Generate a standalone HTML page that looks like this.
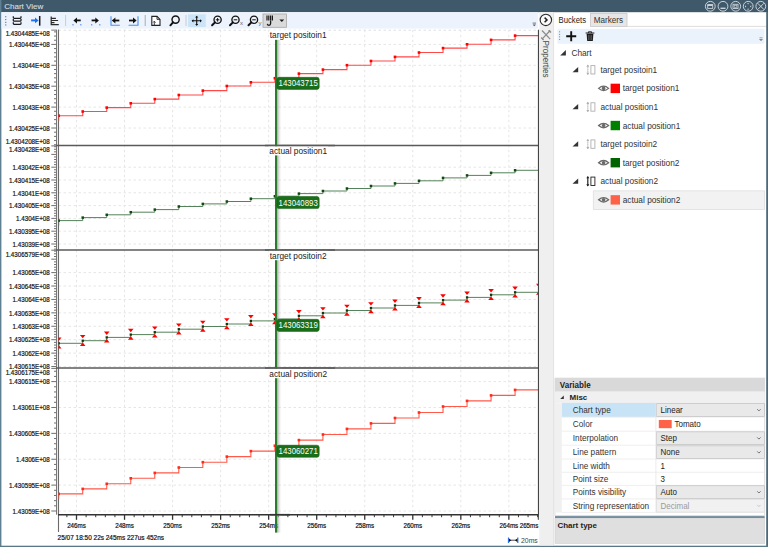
<!DOCTYPE html>
<html><head><meta charset="utf-8"><style>
html,body{margin:0;padding:0;width:768px;height:547px;overflow:hidden;background:#fff;}
svg{display:block;}
text{font-family:"Liberation Sans",sans-serif;}
</style></head><body>
<svg width="768" height="547" viewBox="0 0 768 547" font-family="Liberation Sans, sans-serif">
<rect x="0" y="0" width="768" height="547" fill="#ffffff"/>
<rect x="0" y="0" width="768" height="12.2" fill="#40596a"/>
<text x="4.20" y="8.83" font-size="7.40" fill="#d4dde3" text-anchor="start" textLength="39.10" lengthAdjust="spacingAndGlyphs"  stroke="#d4dde3" stroke-width="0.10">Chart View</text>
<circle cx="710.3" cy="6.3" r="4.9" fill="none" stroke="#c9d3da" stroke-width="1"/>
<circle cx="723.0" cy="6.3" r="4.9" fill="none" stroke="#c9d3da" stroke-width="1"/>
<circle cx="735.7" cy="6.3" r="4.9" fill="none" stroke="#c9d3da" stroke-width="1"/>
<circle cx="748.2" cy="6.3" r="4.9" fill="none" stroke="#c9d3da" stroke-width="1"/>
<circle cx="760.8" cy="6.3" r="4.9" fill="none" stroke="#c9d3da" stroke-width="1"/>
<rect x="707.7" y="4.6" width="5" height="3.8" fill="none" stroke="#c9d3da" stroke-width="0.9"/><rect x="707.7" y="4.4" width="5" height="1.6" fill="#c9d3da"/>
<rect x="720.5" y="7.6" width="5" height="1.4" fill="#c9d3da"/>
<rect x="733.0" y="4.3" width="5" height="4.2" fill="none" stroke="#c9d3da" stroke-width="0.9"/><rect x="734.2" y="5.4" width="2.6" height="2" fill="none" stroke="#c9d3da" stroke-width="0.6"/>
<path d="M748.1 4.6 L747 3.3 H749.2 Z M748.1 8.2 L747 9.5 H749.2 Z M746.3 6.4 L745 5.3 V7.5 Z M749.9 6.4 L751.2 5.3 V7.5 Z" fill="#c9d3da"/>
<path d="M757.6 3.2 L764 9.6 M764 3.2 L757.6 9.6" stroke="#c9d3da" stroke-width="1" fill="none"/>
<rect x="0" y="0" width="1.4" height="547" fill="#5f7f93"/>
<rect x="766.2" y="12" width="1.8" height="535" fill="#4d6a7c"/>
<rect x="0" y="545.7" width="768" height="1.3" fill="#5b7889"/>
<rect x="1.5" y="12.2" width="536.4" height="16.4" fill="#ecf3fc"/>
<rect x="5.2" y="16.2" width="1.1" height="1.1" fill="#666"/>
<rect x="5.2" y="19.0" width="1.1" height="1.1" fill="#666"/>
<rect x="5.2" y="21.8" width="1.1" height="1.1" fill="#666"/>
<rect x="5.2" y="24.4" width="1.1" height="1.1" fill="#666"/>
<path d="M13.3 16.2 V17.6 Q13.3 18.3 14.1 18.3 H20.2 Q21 18.3 21 17.6 V16.2" stroke="#1a1a1a" stroke-width="1.25" fill="none"/>
<path d="M13.3 19.1 V20.5 Q13.3 21.2 14.1 21.2 H20.2 Q21 21.2 21 20.5 V19.1" stroke="#1a1a1a" stroke-width="1.25" fill="none"/>
<path d="M13.3 22.2 V23.6 Q13.3 24.3 14.1 24.3 H20.2 Q21 24.3 21 23.6 V22.2" stroke="#1a1a1a" stroke-width="1.25" fill="none"/>
<path d="M31.1 20.4 H36" stroke="#1a6ff5" stroke-width="1.9"/><path d="M35 17.6 L38.6 20.4 L35 23.2 Z" fill="#1a6ff5"/><line x1="39.7" y1="16" x2="39.7" y2="25.7" stroke="#1a1a1a" stroke-width="1.5"/>
<path d="M51.2 16.4 V24.7 H58.8 M51.2 18.4 H55.9 M51.2 20.5 H58.1 M51.2 22.6 H54.5" stroke="#2a2a2a" stroke-width="1.2" fill="none"/>
<line x1="65.6" y1="15" x2="65.6" y2="26" stroke="#c8ccd2" stroke-width="1"/>
<path d="M80.7 20.4 H75.9" stroke="#111" stroke-width="1.8"/><path d="M73.4 20.4 L77.0 17.4 L77.0 23.4 Z" fill="#111"/>
<rect x="72.4" y="24.2" width="1.2" height="1.2" fill="#3b82f0"/><rect x="80.2" y="24.2" width="1.2" height="1.2" fill="#3b82f0"/>
<path d="M91.6 20.4 H96.4" stroke="#111" stroke-width="1.8"/><path d="M98.9 20.4 L95.3 17.4 L95.3 23.4 Z" fill="#111"/>
<rect x="91.1" y="24.2" width="1.2" height="1.2" fill="#3b82f0"/><rect x="99.2" y="24.2" width="1.2" height="1.2" fill="#3b82f0"/>
<path d="M119.3 20.5 H114.3" stroke="#111" stroke-width="1.8"/><path d="M111.8 20.5 L115.4 17.5 L115.4 23.5 Z" fill="#111"/>
<path d="M111 16.2 V25.2 H119.8" stroke="#4b8ff0" stroke-width="1.1" fill="none"/>
<path d="M129.0 20.5 H134.1" stroke="#111" stroke-width="1.8"/><path d="M136.6 20.5 L133.0 17.5 L133.0 23.5 Z" fill="#111"/>
<path d="M138 16.2 V25.2 H128.6" stroke="#4b8ff0" stroke-width="1.1" fill="none"/>
<line x1="145.2" y1="15" x2="145.2" y2="26" stroke="#a8acb2" stroke-width="1"/>
<path d="M151.8 16.4 H157 L160 19.4 V25.4 H151.8 Z" fill="#fff" stroke="#222" stroke-width="1.1"/><path d="M157 16.4 V19.4 H160" fill="none" stroke="#222" stroke-width="0.9"/><path d="M154.3 25 V21.3 M153 22.6 L154.3 21.2 L155.6 22.6" stroke="#333" stroke-width="0.9" fill="none"/>
<circle cx="175.6" cy="19.6" r="3.6" fill="none" stroke="#111" stroke-width="1.4"/><line x1="173.0" y1="22.3" x2="170.4" y2="25.3" stroke="#111" stroke-width="2.0" stroke-linecap="round"/>
<line x1="186" y1="15" x2="186" y2="26" stroke="#c8ccd2" stroke-width="1"/>
<rect x="188" y="14.3" width="17.8" height="12.7" fill="#cce4f8"/>
<path d="M192.2 20.8 H201.2 M196.7 16.4 V25.2" stroke="#111" stroke-width="1.1"/>
<path d="M191.6 20.8 L193.4 19.2 V22.4 Z M201.8 20.8 L200 19.2 V22.4 Z M196.7 15.8 L195.1 17.6 H198.3 Z M196.7 25.8 L195.1 24 H198.3 Z" fill="#111"/>
<circle cx="217.6" cy="19.8" r="3.6" fill="none" stroke="#111" stroke-width="1.35"/><line x1="215.0" y1="22.4" x2="212.1" y2="25.3" stroke="#111" stroke-width="2.0" stroke-linecap="round"/>
<line x1="215.8" y1="19.8" x2="219.4" y2="19.8" stroke="#111" stroke-width="1.0"/>
<line x1="217.6" y1="18.0" x2="217.6" y2="21.6" stroke="#111" stroke-width="1.0"/>
<circle cx="235.5" cy="19.8" r="3.6" fill="none" stroke="#111" stroke-width="1.35"/><line x1="232.9" y1="22.4" x2="230.0" y2="25.3" stroke="#111" stroke-width="2.0" stroke-linecap="round"/>
<line x1="233.7" y1="19.8" x2="237.3" y2="19.8" stroke="#111" stroke-width="1.0"/>
<text x="239.90" y="25.43" font-size="6.00" fill="#666" text-anchor="start" >x</text>
<circle cx="254.0" cy="19.8" r="3.6" fill="none" stroke="#111" stroke-width="1.35"/><line x1="251.4" y1="22.4" x2="248.5" y2="25.3" stroke="#111" stroke-width="2.0" stroke-linecap="round"/>
<line x1="252.2" y1="19.8" x2="255.8" y2="19.8" stroke="#111" stroke-width="1.0"/>
<text x="258.60" y="25.13" font-size="6.00" fill="#666" text-anchor="start" >y</text>
<rect x="263" y="14" width="23.5" height="13.3" fill="#dadada" stroke="#a9a9a9" stroke-width="0.8"/>
<path d="M267.0 15.6 V20.6 M268.8 15.6 V20.6 M270.6 15.6 V20.6 M272.4 15.6 V20.6" stroke="#1a1a1a" stroke-width="1.2"/>
<path d="M270.6 20.6 V23.6 Q270.6 25.3 269 25.3 Q267.5 25.3 267.3 23.8" stroke="#1a1a1a" stroke-width="1.3" fill="none"/>
<path d="M279.4 19.4 H284.2 L281.8 21.9 Z" fill="#1a1a1a"/>
<path d="M532.6 23.1 H536.0" stroke="#555" stroke-width="0.8"/><path d="M532.6 24.4 H536.0 L534.3 26.2 Z" fill="#555"/>
<defs><linearGradient id="sh" x1="0" x2="1" y1="0" y2="0"><stop offset="0" stop-color="#8a8a8a" stop-opacity="0.75"/><stop offset="1" stop-color="#ffffff" stop-opacity="0"/></linearGradient></defs>
<line x1="76.50" y1="29.8" x2="76.50" y2="514" stroke="#e6e6e6" stroke-width="1" stroke-dasharray="2.5,2.5"/>
<line x1="124.54" y1="29.8" x2="124.54" y2="514" stroke="#e6e6e6" stroke-width="1" stroke-dasharray="2.5,2.5"/>
<line x1="172.58" y1="29.8" x2="172.58" y2="514" stroke="#e6e6e6" stroke-width="1" stroke-dasharray="2.5,2.5"/>
<line x1="220.62" y1="29.8" x2="220.62" y2="514" stroke="#e6e6e6" stroke-width="1" stroke-dasharray="2.5,2.5"/>
<line x1="268.66" y1="29.8" x2="268.66" y2="514" stroke="#e6e6e6" stroke-width="1" stroke-dasharray="2.5,2.5"/>
<line x1="316.70" y1="29.8" x2="316.70" y2="514" stroke="#e6e6e6" stroke-width="1" stroke-dasharray="2.5,2.5"/>
<line x1="364.74" y1="29.8" x2="364.74" y2="514" stroke="#e6e6e6" stroke-width="1" stroke-dasharray="2.5,2.5"/>
<line x1="412.78" y1="29.8" x2="412.78" y2="514" stroke="#e6e6e6" stroke-width="1" stroke-dasharray="2.5,2.5"/>
<line x1="460.82" y1="29.8" x2="460.82" y2="514" stroke="#e6e6e6" stroke-width="1" stroke-dasharray="2.5,2.5"/>
<line x1="508.86" y1="29.8" x2="508.86" y2="514" stroke="#e6e6e6" stroke-width="1" stroke-dasharray="2.5,2.5"/>
<line x1="58.5" y1="30.2" x2="538.5" y2="30.2" stroke="#e0e0e0" stroke-width="1" stroke-dasharray="2.5,2.5"/>
<line x1="58.5" y1="44.40" x2="538.5" y2="44.40" stroke="#e6e6e6" stroke-width="1" stroke-dasharray="2.5,2.5"/>
<line x1="58.5" y1="65.30" x2="538.5" y2="65.30" stroke="#e6e6e6" stroke-width="1" stroke-dasharray="2.5,2.5"/>
<line x1="58.5" y1="86.20" x2="538.5" y2="86.20" stroke="#e6e6e6" stroke-width="1" stroke-dasharray="2.5,2.5"/>
<line x1="58.5" y1="107.10" x2="538.5" y2="107.10" stroke="#e6e6e6" stroke-width="1" stroke-dasharray="2.5,2.5"/>
<line x1="58.5" y1="128.00" x2="538.5" y2="128.00" stroke="#e6e6e6" stroke-width="1" stroke-dasharray="2.5,2.5"/>
<line x1="51.3" y1="44.40" x2="56.2" y2="44.40" stroke="#707070" stroke-width="1"/>
<line x1="54.0" y1="40.22" x2="56.2" y2="40.22" stroke="#707070" stroke-width="1"/>
<line x1="54.0" y1="36.04" x2="56.2" y2="36.04" stroke="#707070" stroke-width="1"/>
<line x1="54.0" y1="31.86" x2="56.2" y2="31.86" stroke="#707070" stroke-width="1"/>
<line x1="54.0" y1="48.58" x2="56.2" y2="48.58" stroke="#707070" stroke-width="1"/>
<line x1="54.0" y1="52.76" x2="56.2" y2="52.76" stroke="#707070" stroke-width="1"/>
<line x1="54.0" y1="56.94" x2="56.2" y2="56.94" stroke="#707070" stroke-width="1"/>
<line x1="54.0" y1="61.12" x2="56.2" y2="61.12" stroke="#707070" stroke-width="1"/>
<line x1="51.3" y1="65.30" x2="56.2" y2="65.30" stroke="#707070" stroke-width="1"/>
<line x1="54.0" y1="69.48" x2="56.2" y2="69.48" stroke="#707070" stroke-width="1"/>
<line x1="54.0" y1="73.66" x2="56.2" y2="73.66" stroke="#707070" stroke-width="1"/>
<line x1="54.0" y1="77.84" x2="56.2" y2="77.84" stroke="#707070" stroke-width="1"/>
<line x1="54.0" y1="82.02" x2="56.2" y2="82.02" stroke="#707070" stroke-width="1"/>
<line x1="51.3" y1="86.20" x2="56.2" y2="86.20" stroke="#707070" stroke-width="1"/>
<line x1="54.0" y1="90.38" x2="56.2" y2="90.38" stroke="#707070" stroke-width="1"/>
<line x1="54.0" y1="94.56" x2="56.2" y2="94.56" stroke="#707070" stroke-width="1"/>
<line x1="54.0" y1="98.74" x2="56.2" y2="98.74" stroke="#707070" stroke-width="1"/>
<line x1="54.0" y1="102.92" x2="56.2" y2="102.92" stroke="#707070" stroke-width="1"/>
<line x1="51.3" y1="107.10" x2="56.2" y2="107.10" stroke="#707070" stroke-width="1"/>
<line x1="54.0" y1="111.28" x2="56.2" y2="111.28" stroke="#707070" stroke-width="1"/>
<line x1="54.0" y1="115.46" x2="56.2" y2="115.46" stroke="#707070" stroke-width="1"/>
<line x1="54.0" y1="119.64" x2="56.2" y2="119.64" stroke="#707070" stroke-width="1"/>
<line x1="54.0" y1="123.82" x2="56.2" y2="123.82" stroke="#707070" stroke-width="1"/>
<line x1="51.3" y1="128.00" x2="56.2" y2="128.00" stroke="#707070" stroke-width="1"/>
<line x1="54.0" y1="132.18" x2="56.2" y2="132.18" stroke="#707070" stroke-width="1"/>
<line x1="54.0" y1="136.36" x2="56.2" y2="136.36" stroke="#707070" stroke-width="1"/>
<line x1="54.0" y1="140.54" x2="56.2" y2="140.54" stroke="#707070" stroke-width="1"/>
<line x1="54.0" y1="144.72" x2="56.2" y2="144.72" stroke="#707070" stroke-width="1"/>
<text x="49.80" y="47.13" font-size="7.70" fill="#111" text-anchor="end" textLength="40.71" lengthAdjust="spacingAndGlyphs"  stroke="#111" stroke-width="0.22">1.430445E+08</text>
<text x="49.80" y="68.03" font-size="7.70" fill="#111" text-anchor="end" textLength="37.24" lengthAdjust="spacingAndGlyphs"  stroke="#111" stroke-width="0.22">1.43044E+08</text>
<text x="49.80" y="88.93" font-size="7.70" fill="#111" text-anchor="end" textLength="40.71" lengthAdjust="spacingAndGlyphs"  stroke="#111" stroke-width="0.22">1.430435E+08</text>
<text x="49.80" y="109.83" font-size="7.70" fill="#111" text-anchor="end" textLength="37.24" lengthAdjust="spacingAndGlyphs"  stroke="#111" stroke-width="0.22">1.43043E+08</text>
<text x="49.80" y="130.73" font-size="7.70" fill="#111" text-anchor="end" textLength="40.71" lengthAdjust="spacingAndGlyphs"  stroke="#111" stroke-width="0.22">1.430425E+08</text>
<text x="49.80" y="36.13" font-size="7.70" fill="#111" text-anchor="end" textLength="44.17" lengthAdjust="spacingAndGlyphs"  stroke="#111" stroke-width="0.22">1.4304485E+08</text>
<line x1="51.3" y1="30.10" x2="56.2" y2="30.10" stroke="#707070" stroke-width="1"/>
<text x="49.80" y="144.23" font-size="7.70" fill="#111" text-anchor="end" textLength="44.17" lengthAdjust="spacingAndGlyphs"  stroke="#111" stroke-width="0.22">1.4304208E+08</text>
<line x1="58.5" y1="167.20" x2="538.5" y2="167.20" stroke="#e6e6e6" stroke-width="1" stroke-dasharray="2.5,2.5"/>
<line x1="58.5" y1="180.00" x2="538.5" y2="180.00" stroke="#e6e6e6" stroke-width="1" stroke-dasharray="2.5,2.5"/>
<line x1="58.5" y1="192.80" x2="538.5" y2="192.80" stroke="#e6e6e6" stroke-width="1" stroke-dasharray="2.5,2.5"/>
<line x1="58.5" y1="205.60" x2="538.5" y2="205.60" stroke="#e6e6e6" stroke-width="1" stroke-dasharray="2.5,2.5"/>
<line x1="58.5" y1="218.40" x2="538.5" y2="218.40" stroke="#e6e6e6" stroke-width="1" stroke-dasharray="2.5,2.5"/>
<line x1="58.5" y1="231.20" x2="538.5" y2="231.20" stroke="#e6e6e6" stroke-width="1" stroke-dasharray="2.5,2.5"/>
<line x1="58.5" y1="244.00" x2="538.5" y2="244.00" stroke="#e6e6e6" stroke-width="1" stroke-dasharray="2.5,2.5"/>
<line x1="51.3" y1="167.20" x2="56.2" y2="167.20" stroke="#707070" stroke-width="1"/>
<line x1="54.0" y1="164.64" x2="56.2" y2="164.64" stroke="#707070" stroke-width="1"/>
<line x1="54.0" y1="162.08" x2="56.2" y2="162.08" stroke="#707070" stroke-width="1"/>
<line x1="54.0" y1="159.52" x2="56.2" y2="159.52" stroke="#707070" stroke-width="1"/>
<line x1="54.0" y1="156.96" x2="56.2" y2="156.96" stroke="#707070" stroke-width="1"/>
<line x1="51.3" y1="154.40" x2="56.2" y2="154.40" stroke="#707070" stroke-width="1"/>
<line x1="54.0" y1="151.84" x2="56.2" y2="151.84" stroke="#707070" stroke-width="1"/>
<line x1="54.0" y1="149.28" x2="56.2" y2="149.28" stroke="#707070" stroke-width="1"/>
<line x1="54.0" y1="146.72" x2="56.2" y2="146.72" stroke="#707070" stroke-width="1"/>
<line x1="54.0" y1="169.76" x2="56.2" y2="169.76" stroke="#707070" stroke-width="1"/>
<line x1="54.0" y1="172.32" x2="56.2" y2="172.32" stroke="#707070" stroke-width="1"/>
<line x1="54.0" y1="174.88" x2="56.2" y2="174.88" stroke="#707070" stroke-width="1"/>
<line x1="54.0" y1="177.44" x2="56.2" y2="177.44" stroke="#707070" stroke-width="1"/>
<line x1="51.3" y1="180.00" x2="56.2" y2="180.00" stroke="#707070" stroke-width="1"/>
<line x1="54.0" y1="182.56" x2="56.2" y2="182.56" stroke="#707070" stroke-width="1"/>
<line x1="54.0" y1="185.12" x2="56.2" y2="185.12" stroke="#707070" stroke-width="1"/>
<line x1="54.0" y1="187.68" x2="56.2" y2="187.68" stroke="#707070" stroke-width="1"/>
<line x1="54.0" y1="190.24" x2="56.2" y2="190.24" stroke="#707070" stroke-width="1"/>
<line x1="51.3" y1="192.80" x2="56.2" y2="192.80" stroke="#707070" stroke-width="1"/>
<line x1="54.0" y1="195.36" x2="56.2" y2="195.36" stroke="#707070" stroke-width="1"/>
<line x1="54.0" y1="197.92" x2="56.2" y2="197.92" stroke="#707070" stroke-width="1"/>
<line x1="54.0" y1="200.48" x2="56.2" y2="200.48" stroke="#707070" stroke-width="1"/>
<line x1="54.0" y1="203.04" x2="56.2" y2="203.04" stroke="#707070" stroke-width="1"/>
<line x1="51.3" y1="205.60" x2="56.2" y2="205.60" stroke="#707070" stroke-width="1"/>
<line x1="54.0" y1="208.16" x2="56.2" y2="208.16" stroke="#707070" stroke-width="1"/>
<line x1="54.0" y1="210.72" x2="56.2" y2="210.72" stroke="#707070" stroke-width="1"/>
<line x1="54.0" y1="213.28" x2="56.2" y2="213.28" stroke="#707070" stroke-width="1"/>
<line x1="54.0" y1="215.84" x2="56.2" y2="215.84" stroke="#707070" stroke-width="1"/>
<line x1="51.3" y1="218.40" x2="56.2" y2="218.40" stroke="#707070" stroke-width="1"/>
<line x1="54.0" y1="220.96" x2="56.2" y2="220.96" stroke="#707070" stroke-width="1"/>
<line x1="54.0" y1="223.52" x2="56.2" y2="223.52" stroke="#707070" stroke-width="1"/>
<line x1="54.0" y1="226.08" x2="56.2" y2="226.08" stroke="#707070" stroke-width="1"/>
<line x1="54.0" y1="228.64" x2="56.2" y2="228.64" stroke="#707070" stroke-width="1"/>
<line x1="51.3" y1="231.20" x2="56.2" y2="231.20" stroke="#707070" stroke-width="1"/>
<line x1="54.0" y1="233.76" x2="56.2" y2="233.76" stroke="#707070" stroke-width="1"/>
<line x1="54.0" y1="236.32" x2="56.2" y2="236.32" stroke="#707070" stroke-width="1"/>
<line x1="54.0" y1="238.88" x2="56.2" y2="238.88" stroke="#707070" stroke-width="1"/>
<line x1="54.0" y1="241.44" x2="56.2" y2="241.44" stroke="#707070" stroke-width="1"/>
<line x1="51.3" y1="244.00" x2="56.2" y2="244.00" stroke="#707070" stroke-width="1"/>
<line x1="54.0" y1="246.56" x2="56.2" y2="246.56" stroke="#707070" stroke-width="1"/>
<line x1="54.0" y1="249.12" x2="56.2" y2="249.12" stroke="#707070" stroke-width="1"/>
<text x="49.80" y="169.93" font-size="7.70" fill="#111" text-anchor="end" textLength="37.24" lengthAdjust="spacingAndGlyphs"  stroke="#111" stroke-width="0.22">1.43042E+08</text>
<text x="49.80" y="182.73" font-size="7.70" fill="#111" text-anchor="end" textLength="40.71" lengthAdjust="spacingAndGlyphs"  stroke="#111" stroke-width="0.22">1.430415E+08</text>
<text x="49.80" y="195.53" font-size="7.70" fill="#111" text-anchor="end" textLength="37.24" lengthAdjust="spacingAndGlyphs"  stroke="#111" stroke-width="0.22">1.43041E+08</text>
<text x="49.80" y="208.33" font-size="7.70" fill="#111" text-anchor="end" textLength="40.71" lengthAdjust="spacingAndGlyphs"  stroke="#111" stroke-width="0.22">1.430405E+08</text>
<text x="49.80" y="221.13" font-size="7.70" fill="#111" text-anchor="end" textLength="33.78" lengthAdjust="spacingAndGlyphs"  stroke="#111" stroke-width="0.22">1.4304E+08</text>
<text x="49.80" y="233.93" font-size="7.70" fill="#111" text-anchor="end" textLength="40.71" lengthAdjust="spacingAndGlyphs"  stroke="#111" stroke-width="0.22">1.430395E+08</text>
<text x="49.80" y="246.73" font-size="7.70" fill="#111" text-anchor="end" textLength="37.24" lengthAdjust="spacingAndGlyphs"  stroke="#111" stroke-width="0.22">1.43039E+08</text>
<text x="49.80" y="152.33" font-size="7.70" fill="#111" text-anchor="end" textLength="40.71" lengthAdjust="spacingAndGlyphs"  stroke="#111" stroke-width="0.22">1.430428E+08</text>
<line x1="51.3" y1="145.90" x2="56.2" y2="145.90" stroke="#707070" stroke-width="1"/>
<line x1="58.5" y1="272.60" x2="538.5" y2="272.60" stroke="#e6e6e6" stroke-width="1" stroke-dasharray="2.5,2.5"/>
<line x1="58.5" y1="286.02" x2="538.5" y2="286.02" stroke="#e6e6e6" stroke-width="1" stroke-dasharray="2.5,2.5"/>
<line x1="58.5" y1="299.44" x2="538.5" y2="299.44" stroke="#e6e6e6" stroke-width="1" stroke-dasharray="2.5,2.5"/>
<line x1="58.5" y1="312.86" x2="538.5" y2="312.86" stroke="#e6e6e6" stroke-width="1" stroke-dasharray="2.5,2.5"/>
<line x1="58.5" y1="326.28" x2="538.5" y2="326.28" stroke="#e6e6e6" stroke-width="1" stroke-dasharray="2.5,2.5"/>
<line x1="58.5" y1="339.70" x2="538.5" y2="339.70" stroke="#e6e6e6" stroke-width="1" stroke-dasharray="2.5,2.5"/>
<line x1="58.5" y1="353.12" x2="538.5" y2="353.12" stroke="#e6e6e6" stroke-width="1" stroke-dasharray="2.5,2.5"/>
<line x1="58.5" y1="366.54" x2="538.5" y2="366.54" stroke="#e6e6e6" stroke-width="1" stroke-dasharray="2.5,2.5"/>
<line x1="51.3" y1="272.60" x2="56.2" y2="272.60" stroke="#707070" stroke-width="1"/>
<line x1="54.0" y1="269.92" x2="56.2" y2="269.92" stroke="#707070" stroke-width="1"/>
<line x1="54.0" y1="267.23" x2="56.2" y2="267.23" stroke="#707070" stroke-width="1"/>
<line x1="54.0" y1="264.55" x2="56.2" y2="264.55" stroke="#707070" stroke-width="1"/>
<line x1="54.0" y1="261.86" x2="56.2" y2="261.86" stroke="#707070" stroke-width="1"/>
<line x1="51.3" y1="259.18" x2="56.2" y2="259.18" stroke="#707070" stroke-width="1"/>
<line x1="54.0" y1="256.50" x2="56.2" y2="256.50" stroke="#707070" stroke-width="1"/>
<line x1="54.0" y1="253.81" x2="56.2" y2="253.81" stroke="#707070" stroke-width="1"/>
<line x1="54.0" y1="251.13" x2="56.2" y2="251.13" stroke="#707070" stroke-width="1"/>
<line x1="54.0" y1="275.28" x2="56.2" y2="275.28" stroke="#707070" stroke-width="1"/>
<line x1="54.0" y1="277.97" x2="56.2" y2="277.97" stroke="#707070" stroke-width="1"/>
<line x1="54.0" y1="280.65" x2="56.2" y2="280.65" stroke="#707070" stroke-width="1"/>
<line x1="54.0" y1="283.34" x2="56.2" y2="283.34" stroke="#707070" stroke-width="1"/>
<line x1="51.3" y1="286.02" x2="56.2" y2="286.02" stroke="#707070" stroke-width="1"/>
<line x1="54.0" y1="288.70" x2="56.2" y2="288.70" stroke="#707070" stroke-width="1"/>
<line x1="54.0" y1="291.39" x2="56.2" y2="291.39" stroke="#707070" stroke-width="1"/>
<line x1="54.0" y1="294.07" x2="56.2" y2="294.07" stroke="#707070" stroke-width="1"/>
<line x1="54.0" y1="296.76" x2="56.2" y2="296.76" stroke="#707070" stroke-width="1"/>
<line x1="51.3" y1="299.44" x2="56.2" y2="299.44" stroke="#707070" stroke-width="1"/>
<line x1="54.0" y1="302.12" x2="56.2" y2="302.12" stroke="#707070" stroke-width="1"/>
<line x1="54.0" y1="304.81" x2="56.2" y2="304.81" stroke="#707070" stroke-width="1"/>
<line x1="54.0" y1="307.49" x2="56.2" y2="307.49" stroke="#707070" stroke-width="1"/>
<line x1="54.0" y1="310.18" x2="56.2" y2="310.18" stroke="#707070" stroke-width="1"/>
<line x1="51.3" y1="312.86" x2="56.2" y2="312.86" stroke="#707070" stroke-width="1"/>
<line x1="54.0" y1="315.54" x2="56.2" y2="315.54" stroke="#707070" stroke-width="1"/>
<line x1="54.0" y1="318.23" x2="56.2" y2="318.23" stroke="#707070" stroke-width="1"/>
<line x1="54.0" y1="320.91" x2="56.2" y2="320.91" stroke="#707070" stroke-width="1"/>
<line x1="54.0" y1="323.60" x2="56.2" y2="323.60" stroke="#707070" stroke-width="1"/>
<line x1="51.3" y1="326.28" x2="56.2" y2="326.28" stroke="#707070" stroke-width="1"/>
<line x1="54.0" y1="328.96" x2="56.2" y2="328.96" stroke="#707070" stroke-width="1"/>
<line x1="54.0" y1="331.65" x2="56.2" y2="331.65" stroke="#707070" stroke-width="1"/>
<line x1="54.0" y1="334.33" x2="56.2" y2="334.33" stroke="#707070" stroke-width="1"/>
<line x1="54.0" y1="337.02" x2="56.2" y2="337.02" stroke="#707070" stroke-width="1"/>
<line x1="51.3" y1="339.70" x2="56.2" y2="339.70" stroke="#707070" stroke-width="1"/>
<line x1="54.0" y1="342.38" x2="56.2" y2="342.38" stroke="#707070" stroke-width="1"/>
<line x1="54.0" y1="345.07" x2="56.2" y2="345.07" stroke="#707070" stroke-width="1"/>
<line x1="54.0" y1="347.75" x2="56.2" y2="347.75" stroke="#707070" stroke-width="1"/>
<line x1="54.0" y1="350.44" x2="56.2" y2="350.44" stroke="#707070" stroke-width="1"/>
<line x1="51.3" y1="353.12" x2="56.2" y2="353.12" stroke="#707070" stroke-width="1"/>
<line x1="54.0" y1="355.80" x2="56.2" y2="355.80" stroke="#707070" stroke-width="1"/>
<line x1="54.0" y1="358.49" x2="56.2" y2="358.49" stroke="#707070" stroke-width="1"/>
<line x1="54.0" y1="361.17" x2="56.2" y2="361.17" stroke="#707070" stroke-width="1"/>
<line x1="54.0" y1="363.86" x2="56.2" y2="363.86" stroke="#707070" stroke-width="1"/>
<line x1="51.3" y1="366.54" x2="56.2" y2="366.54" stroke="#707070" stroke-width="1"/>
<text x="49.80" y="275.33" font-size="7.70" fill="#111" text-anchor="end" textLength="37.24" lengthAdjust="spacingAndGlyphs"  stroke="#111" stroke-width="0.22">1.43065E+08</text>
<text x="49.80" y="288.75" font-size="7.70" fill="#111" text-anchor="end" textLength="40.71" lengthAdjust="spacingAndGlyphs"  stroke="#111" stroke-width="0.22">1.430645E+08</text>
<text x="49.80" y="302.17" font-size="7.70" fill="#111" text-anchor="end" textLength="37.24" lengthAdjust="spacingAndGlyphs"  stroke="#111" stroke-width="0.22">1.43064E+08</text>
<text x="49.80" y="315.59" font-size="7.70" fill="#111" text-anchor="end" textLength="40.71" lengthAdjust="spacingAndGlyphs"  stroke="#111" stroke-width="0.22">1.430635E+08</text>
<text x="49.80" y="329.01" font-size="7.70" fill="#111" text-anchor="end" textLength="37.24" lengthAdjust="spacingAndGlyphs"  stroke="#111" stroke-width="0.22">1.43063E+08</text>
<text x="49.80" y="342.43" font-size="7.70" fill="#111" text-anchor="end" textLength="40.71" lengthAdjust="spacingAndGlyphs"  stroke="#111" stroke-width="0.22">1.430625E+08</text>
<text x="49.80" y="355.85" font-size="7.70" fill="#111" text-anchor="end" textLength="37.24" lengthAdjust="spacingAndGlyphs"  stroke="#111" stroke-width="0.22">1.43062E+08</text>
<text x="49.80" y="369.27" font-size="7.70" fill="#111" text-anchor="end" textLength="40.71" lengthAdjust="spacingAndGlyphs"  stroke="#111" stroke-width="0.22">1.430615E+08</text>
<text x="49.80" y="257.13" font-size="7.70" fill="#111" text-anchor="end" textLength="44.17" lengthAdjust="spacingAndGlyphs"  stroke="#111" stroke-width="0.22">1.4306579E+08</text>
<line x1="51.3" y1="250.20" x2="56.2" y2="250.20" stroke="#707070" stroke-width="1"/>
<line x1="58.5" y1="381.60" x2="538.5" y2="381.60" stroke="#e6e6e6" stroke-width="1" stroke-dasharray="2.5,2.5"/>
<line x1="58.5" y1="407.48" x2="538.5" y2="407.48" stroke="#e6e6e6" stroke-width="1" stroke-dasharray="2.5,2.5"/>
<line x1="58.5" y1="433.36" x2="538.5" y2="433.36" stroke="#e6e6e6" stroke-width="1" stroke-dasharray="2.5,2.5"/>
<line x1="58.5" y1="459.24" x2="538.5" y2="459.24" stroke="#e6e6e6" stroke-width="1" stroke-dasharray="2.5,2.5"/>
<line x1="58.5" y1="485.12" x2="538.5" y2="485.12" stroke="#e6e6e6" stroke-width="1" stroke-dasharray="2.5,2.5"/>
<line x1="58.5" y1="511.00" x2="538.5" y2="511.00" stroke="#e6e6e6" stroke-width="1" stroke-dasharray="2.5,2.5"/>
<line x1="51.3" y1="381.60" x2="56.2" y2="381.60" stroke="#707070" stroke-width="1"/>
<line x1="54.0" y1="376.42" x2="56.2" y2="376.42" stroke="#707070" stroke-width="1"/>
<line x1="54.0" y1="371.25" x2="56.2" y2="371.25" stroke="#707070" stroke-width="1"/>
<line x1="54.0" y1="386.78" x2="56.2" y2="386.78" stroke="#707070" stroke-width="1"/>
<line x1="54.0" y1="391.95" x2="56.2" y2="391.95" stroke="#707070" stroke-width="1"/>
<line x1="54.0" y1="397.13" x2="56.2" y2="397.13" stroke="#707070" stroke-width="1"/>
<line x1="54.0" y1="402.30" x2="56.2" y2="402.30" stroke="#707070" stroke-width="1"/>
<line x1="51.3" y1="407.48" x2="56.2" y2="407.48" stroke="#707070" stroke-width="1"/>
<line x1="54.0" y1="412.66" x2="56.2" y2="412.66" stroke="#707070" stroke-width="1"/>
<line x1="54.0" y1="417.83" x2="56.2" y2="417.83" stroke="#707070" stroke-width="1"/>
<line x1="54.0" y1="423.01" x2="56.2" y2="423.01" stroke="#707070" stroke-width="1"/>
<line x1="54.0" y1="428.18" x2="56.2" y2="428.18" stroke="#707070" stroke-width="1"/>
<line x1="51.3" y1="433.36" x2="56.2" y2="433.36" stroke="#707070" stroke-width="1"/>
<line x1="54.0" y1="438.54" x2="56.2" y2="438.54" stroke="#707070" stroke-width="1"/>
<line x1="54.0" y1="443.71" x2="56.2" y2="443.71" stroke="#707070" stroke-width="1"/>
<line x1="54.0" y1="448.89" x2="56.2" y2="448.89" stroke="#707070" stroke-width="1"/>
<line x1="54.0" y1="454.06" x2="56.2" y2="454.06" stroke="#707070" stroke-width="1"/>
<line x1="51.3" y1="459.24" x2="56.2" y2="459.24" stroke="#707070" stroke-width="1"/>
<line x1="54.0" y1="464.42" x2="56.2" y2="464.42" stroke="#707070" stroke-width="1"/>
<line x1="54.0" y1="469.59" x2="56.2" y2="469.59" stroke="#707070" stroke-width="1"/>
<line x1="54.0" y1="474.77" x2="56.2" y2="474.77" stroke="#707070" stroke-width="1"/>
<line x1="54.0" y1="479.94" x2="56.2" y2="479.94" stroke="#707070" stroke-width="1"/>
<line x1="51.3" y1="485.12" x2="56.2" y2="485.12" stroke="#707070" stroke-width="1"/>
<line x1="54.0" y1="490.30" x2="56.2" y2="490.30" stroke="#707070" stroke-width="1"/>
<line x1="54.0" y1="495.47" x2="56.2" y2="495.47" stroke="#707070" stroke-width="1"/>
<line x1="54.0" y1="500.65" x2="56.2" y2="500.65" stroke="#707070" stroke-width="1"/>
<line x1="54.0" y1="505.82" x2="56.2" y2="505.82" stroke="#707070" stroke-width="1"/>
<line x1="51.3" y1="511.00" x2="56.2" y2="511.00" stroke="#707070" stroke-width="1"/>
<text x="49.80" y="384.33" font-size="7.70" fill="#111" text-anchor="end" textLength="40.71" lengthAdjust="spacingAndGlyphs"  stroke="#111" stroke-width="0.22">1.430615E+08</text>
<text x="49.80" y="410.21" font-size="7.70" fill="#111" text-anchor="end" textLength="37.24" lengthAdjust="spacingAndGlyphs"  stroke="#111" stroke-width="0.22">1.43061E+08</text>
<text x="49.80" y="436.09" font-size="7.70" fill="#111" text-anchor="end" textLength="40.71" lengthAdjust="spacingAndGlyphs"  stroke="#111" stroke-width="0.22">1.430605E+08</text>
<text x="49.80" y="461.97" font-size="7.70" fill="#111" text-anchor="end" textLength="33.78" lengthAdjust="spacingAndGlyphs"  stroke="#111" stroke-width="0.22">1.4306E+08</text>
<text x="49.80" y="487.85" font-size="7.70" fill="#111" text-anchor="end" textLength="40.71" lengthAdjust="spacingAndGlyphs"  stroke="#111" stroke-width="0.22">1.430595E+08</text>
<text x="49.80" y="513.73" font-size="7.70" fill="#111" text-anchor="end" textLength="37.24" lengthAdjust="spacingAndGlyphs"  stroke="#111" stroke-width="0.22">1.43059E+08</text>
<text x="49.80" y="375.03" font-size="7.70" fill="#111" text-anchor="end" textLength="44.17" lengthAdjust="spacingAndGlyphs"  stroke="#111" stroke-width="0.22">1.4306175E+08</text>
<line x1="51.3" y1="368.40" x2="56.2" y2="368.40" stroke="#707070" stroke-width="1"/>
<line x1="56.6" y1="29.6" x2="56.6" y2="514.7" stroke="#6a6a6a" stroke-width="1"/>
<line x1="58.5" y1="29.6" x2="58.5" y2="532" stroke="#6a6a6a" stroke-width="1.1"/>
<line x1="66.89" y1="514.7" x2="66.89" y2="517.2" stroke="#333" stroke-width="1"/>
<line x1="76.50" y1="514.7" x2="76.50" y2="519.8" stroke="#333" stroke-width="1.3"/>
<line x1="86.11" y1="514.7" x2="86.11" y2="517.2" stroke="#333" stroke-width="1"/>
<line x1="95.72" y1="514.7" x2="95.72" y2="517.2" stroke="#333" stroke-width="1"/>
<line x1="105.32" y1="514.7" x2="105.32" y2="517.2" stroke="#333" stroke-width="1"/>
<line x1="114.93" y1="514.7" x2="114.93" y2="517.2" stroke="#333" stroke-width="1"/>
<line x1="124.54" y1="514.7" x2="124.54" y2="519.8" stroke="#333" stroke-width="1.3"/>
<line x1="134.15" y1="514.7" x2="134.15" y2="517.2" stroke="#333" stroke-width="1"/>
<line x1="143.76" y1="514.7" x2="143.76" y2="517.2" stroke="#333" stroke-width="1"/>
<line x1="153.36" y1="514.7" x2="153.36" y2="517.2" stroke="#333" stroke-width="1"/>
<line x1="162.97" y1="514.7" x2="162.97" y2="517.2" stroke="#333" stroke-width="1"/>
<line x1="172.58" y1="514.7" x2="172.58" y2="519.8" stroke="#333" stroke-width="1.3"/>
<line x1="182.19" y1="514.7" x2="182.19" y2="517.2" stroke="#333" stroke-width="1"/>
<line x1="191.80" y1="514.7" x2="191.80" y2="517.2" stroke="#333" stroke-width="1"/>
<line x1="201.40" y1="514.7" x2="201.40" y2="517.2" stroke="#333" stroke-width="1"/>
<line x1="211.01" y1="514.7" x2="211.01" y2="517.2" stroke="#333" stroke-width="1"/>
<line x1="220.62" y1="514.7" x2="220.62" y2="519.8" stroke="#333" stroke-width="1.3"/>
<line x1="230.23" y1="514.7" x2="230.23" y2="517.2" stroke="#333" stroke-width="1"/>
<line x1="239.84" y1="514.7" x2="239.84" y2="517.2" stroke="#333" stroke-width="1"/>
<line x1="249.44" y1="514.7" x2="249.44" y2="517.2" stroke="#333" stroke-width="1"/>
<line x1="259.05" y1="514.7" x2="259.05" y2="517.2" stroke="#333" stroke-width="1"/>
<line x1="268.66" y1="514.7" x2="268.66" y2="519.8" stroke="#333" stroke-width="1.3"/>
<line x1="278.27" y1="514.7" x2="278.27" y2="517.2" stroke="#333" stroke-width="1"/>
<line x1="287.88" y1="514.7" x2="287.88" y2="517.2" stroke="#333" stroke-width="1"/>
<line x1="297.48" y1="514.7" x2="297.48" y2="517.2" stroke="#333" stroke-width="1"/>
<line x1="307.09" y1="514.7" x2="307.09" y2="517.2" stroke="#333" stroke-width="1"/>
<line x1="316.70" y1="514.7" x2="316.70" y2="519.8" stroke="#333" stroke-width="1.3"/>
<line x1="326.31" y1="514.7" x2="326.31" y2="517.2" stroke="#333" stroke-width="1"/>
<line x1="335.92" y1="514.7" x2="335.92" y2="517.2" stroke="#333" stroke-width="1"/>
<line x1="345.52" y1="514.7" x2="345.52" y2="517.2" stroke="#333" stroke-width="1"/>
<line x1="355.13" y1="514.7" x2="355.13" y2="517.2" stroke="#333" stroke-width="1"/>
<line x1="364.74" y1="514.7" x2="364.74" y2="519.8" stroke="#333" stroke-width="1.3"/>
<line x1="374.35" y1="514.7" x2="374.35" y2="517.2" stroke="#333" stroke-width="1"/>
<line x1="383.96" y1="514.7" x2="383.96" y2="517.2" stroke="#333" stroke-width="1"/>
<line x1="393.56" y1="514.7" x2="393.56" y2="517.2" stroke="#333" stroke-width="1"/>
<line x1="403.17" y1="514.7" x2="403.17" y2="517.2" stroke="#333" stroke-width="1"/>
<line x1="412.78" y1="514.7" x2="412.78" y2="519.8" stroke="#333" stroke-width="1.3"/>
<line x1="422.39" y1="514.7" x2="422.39" y2="517.2" stroke="#333" stroke-width="1"/>
<line x1="432.00" y1="514.7" x2="432.00" y2="517.2" stroke="#333" stroke-width="1"/>
<line x1="441.60" y1="514.7" x2="441.60" y2="517.2" stroke="#333" stroke-width="1"/>
<line x1="451.21" y1="514.7" x2="451.21" y2="517.2" stroke="#333" stroke-width="1"/>
<line x1="460.82" y1="514.7" x2="460.82" y2="519.8" stroke="#333" stroke-width="1.3"/>
<line x1="470.43" y1="514.7" x2="470.43" y2="517.2" stroke="#333" stroke-width="1"/>
<line x1="480.04" y1="514.7" x2="480.04" y2="517.2" stroke="#333" stroke-width="1"/>
<line x1="489.64" y1="514.7" x2="489.64" y2="517.2" stroke="#333" stroke-width="1"/>
<line x1="499.25" y1="514.7" x2="499.25" y2="517.2" stroke="#333" stroke-width="1"/>
<line x1="508.86" y1="514.7" x2="508.86" y2="519.8" stroke="#333" stroke-width="1.3"/>
<line x1="518.47" y1="514.7" x2="518.47" y2="517.2" stroke="#333" stroke-width="1"/>
<line x1="528.08" y1="514.7" x2="528.08" y2="517.2" stroke="#333" stroke-width="1"/>
<line x1="537.68" y1="514.7" x2="537.68" y2="517.2" stroke="#333" stroke-width="1"/>
<line x1="538.3" y1="514.7" x2="538.3" y2="519.8" stroke="#333" stroke-width="1"/>
<text x="76.50" y="528.23" font-size="7.70" fill="#111" text-anchor="middle" textLength="18.70" lengthAdjust="spacingAndGlyphs"  stroke="#111" stroke-width="0.22">246ms</text>
<text x="124.54" y="528.23" font-size="7.70" fill="#111" text-anchor="middle" textLength="18.70" lengthAdjust="spacingAndGlyphs"  stroke="#111" stroke-width="0.22">248ms</text>
<text x="172.58" y="528.23" font-size="7.70" fill="#111" text-anchor="middle" textLength="18.70" lengthAdjust="spacingAndGlyphs"  stroke="#111" stroke-width="0.22">250ms</text>
<text x="220.62" y="528.23" font-size="7.70" fill="#111" text-anchor="middle" textLength="18.70" lengthAdjust="spacingAndGlyphs"  stroke="#111" stroke-width="0.22">252ms</text>
<text x="268.66" y="528.23" font-size="7.70" fill="#111" text-anchor="middle" textLength="18.70" lengthAdjust="spacingAndGlyphs"  stroke="#111" stroke-width="0.22">254ms</text>
<text x="316.70" y="528.23" font-size="7.70" fill="#111" text-anchor="middle" textLength="18.70" lengthAdjust="spacingAndGlyphs"  stroke="#111" stroke-width="0.22">256ms</text>
<text x="364.74" y="528.23" font-size="7.70" fill="#111" text-anchor="middle" textLength="18.70" lengthAdjust="spacingAndGlyphs"  stroke="#111" stroke-width="0.22">258ms</text>
<text x="412.78" y="528.23" font-size="7.70" fill="#111" text-anchor="middle" textLength="18.70" lengthAdjust="spacingAndGlyphs"  stroke="#111" stroke-width="0.22">260ms</text>
<text x="460.82" y="528.23" font-size="7.70" fill="#111" text-anchor="middle" textLength="18.70" lengthAdjust="spacingAndGlyphs"  stroke="#111" stroke-width="0.22">262ms</text>
<text x="508.86" y="528.23" font-size="7.70" fill="#111" text-anchor="middle" textLength="18.70" lengthAdjust="spacingAndGlyphs"  stroke="#111" stroke-width="0.22">264ms</text>
<text x="538.40" y="528.23" font-size="7.70" fill="#111" text-anchor="end" textLength="18.70" lengthAdjust="spacingAndGlyphs"  stroke="#111" stroke-width="0.22">265ms</text>
<text x="57.60" y="540.43" font-size="7.70" fill="#111" text-anchor="start" textLength="106.40" lengthAdjust="spacingAndGlyphs"  stroke="#111" stroke-width="0.22">25/07 18:50 22s 245ms 227us 452ns</text>
<path d="M508.5 537.4 V542.9 M517.8 537.4 V542.9" stroke="#2a6fe6" stroke-width="1.2"/>
<path d="M510.5 540.2 H515.8" stroke="#222" stroke-width="0.8"/><path d="M509.0 538.5 L511.4 540.2 L509.0 541.9 Z M517.3 538.5 L514.9 540.2 L517.3 541.9 Z" fill="#111"/>
<text x="521.00" y="543.20" font-size="7.90" fill="#444" text-anchor="start" textLength="16.80" lengthAdjust="spacingAndGlyphs" >20ms</text>
<clipPath id="cp"><rect x="58.5" y="29" width="480" height="486"/></clipPath>
<g clip-path="url(#cp)">
<path d="M58.7 120.70 V115.70 H82.72 V111.50 H106.74 V107.60 H130.76 V103.30 H154.78 V99.10 H178.80 V95.00 H202.82 V90.60 H226.84 V86.00 H250.86 V82.30 H274.88 V78.20 H298.90 V73.60 H322.92 V69.60 H346.94 V65.20 H370.96 V61.00 H394.98 V56.90 H419.00 V52.50 H443.02 V48.10 H467.04 V44.30 H491.06 V39.90 H515.08 V35.60 H538.3" fill="none" stroke="#ff4a4a" stroke-width="1.10"/>
<rect x="57.40" y="114.40" width="2.60" height="2.60" fill="#ff0000"/>
<rect x="81.42" y="110.20" width="2.60" height="2.60" fill="#ff0000"/>
<rect x="105.44" y="106.30" width="2.60" height="2.60" fill="#ff0000"/>
<rect x="129.46" y="102.00" width="2.60" height="2.60" fill="#ff0000"/>
<rect x="153.48" y="97.80" width="2.60" height="2.60" fill="#ff0000"/>
<rect x="177.50" y="93.70" width="2.60" height="2.60" fill="#ff0000"/>
<rect x="201.52" y="89.30" width="2.60" height="2.60" fill="#ff0000"/>
<rect x="225.54" y="84.70" width="2.60" height="2.60" fill="#ff0000"/>
<rect x="249.56" y="81.00" width="2.60" height="2.60" fill="#ff0000"/>
<rect x="273.58" y="76.90" width="2.60" height="2.60" fill="#ff0000"/>
<rect x="297.60" y="72.30" width="2.60" height="2.60" fill="#ff0000"/>
<rect x="321.62" y="68.30" width="2.60" height="2.60" fill="#ff0000"/>
<rect x="345.64" y="63.90" width="2.60" height="2.60" fill="#ff0000"/>
<rect x="369.66" y="59.70" width="2.60" height="2.60" fill="#ff0000"/>
<rect x="393.68" y="55.60" width="2.60" height="2.60" fill="#ff0000"/>
<rect x="417.70" y="51.20" width="2.60" height="2.60" fill="#ff0000"/>
<rect x="441.72" y="46.80" width="2.60" height="2.60" fill="#ff0000"/>
<rect x="465.74" y="43.00" width="2.60" height="2.60" fill="#ff0000"/>
<rect x="489.76" y="38.60" width="2.60" height="2.60" fill="#ff0000"/>
<rect x="513.78" y="34.30" width="2.60" height="2.60" fill="#ff0000"/>
<path d="M58.7 225.60 V220.60 H82.72 V217.60 H106.74 V214.80 H130.76 V212.20 H154.78 V209.60 H178.80 V206.50 H202.82 V203.90 H226.84 V201.50 H250.86 V198.70 H274.88 V196.20 H298.90 V193.60 H322.92 V191.00 H346.94 V188.50 H370.96 V186.00 H394.98 V183.40 H419.00 V180.80 H443.02 V177.90 H467.04 V175.40 H491.06 V172.80 H515.08 V170.30 H538.3" fill="none" stroke="#55825a" stroke-width="1.00"/>
<rect x="57.45" y="219.35" width="2.50" height="2.50" fill="#0f4a0f"/>
<rect x="81.47" y="216.35" width="2.50" height="2.50" fill="#0f4a0f"/>
<rect x="105.49" y="213.55" width="2.50" height="2.50" fill="#0f4a0f"/>
<rect x="129.51" y="210.95" width="2.50" height="2.50" fill="#0f4a0f"/>
<rect x="153.53" y="208.35" width="2.50" height="2.50" fill="#0f4a0f"/>
<rect x="177.55" y="205.25" width="2.50" height="2.50" fill="#0f4a0f"/>
<rect x="201.57" y="202.65" width="2.50" height="2.50" fill="#0f4a0f"/>
<rect x="225.59" y="200.25" width="2.50" height="2.50" fill="#0f4a0f"/>
<rect x="249.61" y="197.45" width="2.50" height="2.50" fill="#0f4a0f"/>
<rect x="273.63" y="194.95" width="2.50" height="2.50" fill="#0f4a0f"/>
<rect x="297.65" y="192.35" width="2.50" height="2.50" fill="#0f4a0f"/>
<rect x="321.67" y="189.75" width="2.50" height="2.50" fill="#0f4a0f"/>
<rect x="345.69" y="187.25" width="2.50" height="2.50" fill="#0f4a0f"/>
<rect x="369.71" y="184.75" width="2.50" height="2.50" fill="#0f4a0f"/>
<rect x="393.73" y="182.15" width="2.50" height="2.50" fill="#0f4a0f"/>
<rect x="417.75" y="179.55" width="2.50" height="2.50" fill="#0f4a0f"/>
<rect x="441.77" y="176.65" width="2.50" height="2.50" fill="#0f4a0f"/>
<rect x="465.79" y="174.15" width="2.50" height="2.50" fill="#0f4a0f"/>
<rect x="489.81" y="171.55" width="2.50" height="2.50" fill="#0f4a0f"/>
<rect x="513.83" y="169.05" width="2.50" height="2.50" fill="#0f4a0f"/>
<path d="M58.7 348.30 V343.30 H82.72 V340.70 H106.74 V337.40 H130.76 V334.60 H154.78 V332.20 H178.80 V329.20 H202.82 V326.50 H226.84 V324.00 H250.86 V320.90 H274.88 V319.00 H298.90 V315.80 H322.92 V313.00 H346.94 V310.50 H370.96 V308.00 H394.98 V305.40 H419.00 V302.90 H443.02 V300.10 H467.04 V297.40 H491.06 V294.80 H515.08 V292.30 H538.3" fill="none" stroke="#55825a" stroke-width="1.00"/>
<path d="M55.90 337.50 H61.50 L58.70 340.90 Z M55.90 348.50 H61.50 L58.70 345.00 Z" fill="#ff0000"/>
<rect x="57.55" y="342.15" width="2.30" height="2.30" fill="#0f3a0f"/>
<path d="M79.92 334.90 H85.52 L82.72 338.30 Z M79.92 345.90 H85.52 L82.72 342.40 Z" fill="#ff0000"/>
<rect x="81.57" y="339.55" width="2.30" height="2.30" fill="#0f3a0f"/>
<path d="M103.94 331.60 H109.54 L106.74 335.00 Z M103.94 342.60 H109.54 L106.74 339.10 Z" fill="#ff0000"/>
<rect x="105.59" y="336.25" width="2.30" height="2.30" fill="#0f3a0f"/>
<path d="M127.96 328.80 H133.56 L130.76 332.20 Z M127.96 339.80 H133.56 L130.76 336.30 Z" fill="#ff0000"/>
<rect x="129.61" y="333.45" width="2.30" height="2.30" fill="#0f3a0f"/>
<path d="M151.98 326.40 H157.58 L154.78 329.80 Z M151.98 337.40 H157.58 L154.78 333.90 Z" fill="#ff0000"/>
<rect x="153.63" y="331.05" width="2.30" height="2.30" fill="#0f3a0f"/>
<path d="M176.00 323.40 H181.60 L178.80 326.80 Z M176.00 334.40 H181.60 L178.80 330.90 Z" fill="#ff0000"/>
<rect x="177.65" y="328.05" width="2.30" height="2.30" fill="#0f3a0f"/>
<path d="M200.02 320.70 H205.62 L202.82 324.10 Z M200.02 331.70 H205.62 L202.82 328.20 Z" fill="#ff0000"/>
<rect x="201.67" y="325.35" width="2.30" height="2.30" fill="#0f3a0f"/>
<path d="M224.04 318.20 H229.64 L226.84 321.60 Z M224.04 329.20 H229.64 L226.84 325.70 Z" fill="#ff0000"/>
<rect x="225.69" y="322.85" width="2.30" height="2.30" fill="#0f3a0f"/>
<path d="M248.06 315.10 H253.66 L250.86 318.50 Z M248.06 326.10 H253.66 L250.86 322.60 Z" fill="#ff0000"/>
<rect x="249.71" y="319.75" width="2.30" height="2.30" fill="#0f3a0f"/>
<path d="M272.08 313.20 H277.68 L274.88 316.60 Z M272.08 324.20 H277.68 L274.88 320.70 Z" fill="#ff0000"/>
<rect x="273.73" y="317.85" width="2.30" height="2.30" fill="#0f3a0f"/>
<path d="M296.10 310.00 H301.70 L298.90 313.40 Z M296.10 321.00 H301.70 L298.90 317.50 Z" fill="#ff0000"/>
<rect x="297.75" y="314.65" width="2.30" height="2.30" fill="#0f3a0f"/>
<path d="M320.12 307.20 H325.72 L322.92 310.60 Z M320.12 318.20 H325.72 L322.92 314.70 Z" fill="#ff0000"/>
<rect x="321.77" y="311.85" width="2.30" height="2.30" fill="#0f3a0f"/>
<path d="M344.14 304.70 H349.74 L346.94 308.10 Z M344.14 315.70 H349.74 L346.94 312.20 Z" fill="#ff0000"/>
<rect x="345.79" y="309.35" width="2.30" height="2.30" fill="#0f3a0f"/>
<path d="M368.16 302.20 H373.76 L370.96 305.60 Z M368.16 313.20 H373.76 L370.96 309.70 Z" fill="#ff0000"/>
<rect x="369.81" y="306.85" width="2.30" height="2.30" fill="#0f3a0f"/>
<path d="M392.18 299.60 H397.78 L394.98 303.00 Z M392.18 310.60 H397.78 L394.98 307.10 Z" fill="#ff0000"/>
<rect x="393.83" y="304.25" width="2.30" height="2.30" fill="#0f3a0f"/>
<path d="M416.20 297.10 H421.80 L419.00 300.50 Z M416.20 308.10 H421.80 L419.00 304.60 Z" fill="#ff0000"/>
<rect x="417.85" y="301.75" width="2.30" height="2.30" fill="#0f3a0f"/>
<path d="M440.22 294.30 H445.82 L443.02 297.70 Z M440.22 305.30 H445.82 L443.02 301.80 Z" fill="#ff0000"/>
<rect x="441.87" y="298.95" width="2.30" height="2.30" fill="#0f3a0f"/>
<path d="M464.24 291.60 H469.84 L467.04 295.00 Z M464.24 302.60 H469.84 L467.04 299.10 Z" fill="#ff0000"/>
<rect x="465.89" y="296.25" width="2.30" height="2.30" fill="#0f3a0f"/>
<path d="M488.26 289.00 H493.86 L491.06 292.40 Z M488.26 300.00 H493.86 L491.06 296.50 Z" fill="#ff0000"/>
<rect x="489.91" y="293.65" width="2.30" height="2.30" fill="#0f3a0f"/>
<path d="M512.28 286.50 H517.88 L515.08 289.90 Z M512.28 297.50 H517.88 L515.08 294.00 Z" fill="#ff0000"/>
<rect x="513.93" y="291.15" width="2.30" height="2.30" fill="#0f3a0f"/>
<path d="M58.7 498.90 V493.90 H82.72 V488.90 H106.74 V483.80 H130.76 V478.30 H154.78 V472.90 H178.80 V467.50 H202.82 V462.20 H226.84 V456.60 H250.86 V451.10 H274.88 V445.70 H298.90 V440.10 H322.92 V434.50 H346.94 V428.90 H370.96 V423.40 H394.98 V418.00 H419.00 V412.50 H443.02 V406.50 H467.04 V400.90 H491.06 V395.40 H515.08 V389.90 H538.3" fill="none" stroke="#ff5a4a" stroke-width="1.10"/>
<rect x="57.40" y="492.60" width="2.60" height="2.60" fill="#ff2a1a"/>
<rect x="81.42" y="487.60" width="2.60" height="2.60" fill="#ff2a1a"/>
<rect x="105.44" y="482.50" width="2.60" height="2.60" fill="#ff2a1a"/>
<rect x="129.46" y="477.00" width="2.60" height="2.60" fill="#ff2a1a"/>
<rect x="153.48" y="471.60" width="2.60" height="2.60" fill="#ff2a1a"/>
<rect x="177.50" y="466.20" width="2.60" height="2.60" fill="#ff2a1a"/>
<rect x="201.52" y="460.90" width="2.60" height="2.60" fill="#ff2a1a"/>
<rect x="225.54" y="455.30" width="2.60" height="2.60" fill="#ff2a1a"/>
<rect x="249.56" y="449.80" width="2.60" height="2.60" fill="#ff2a1a"/>
<rect x="273.58" y="444.40" width="2.60" height="2.60" fill="#ff2a1a"/>
<rect x="297.60" y="438.80" width="2.60" height="2.60" fill="#ff2a1a"/>
<rect x="321.62" y="433.20" width="2.60" height="2.60" fill="#ff2a1a"/>
<rect x="345.64" y="427.60" width="2.60" height="2.60" fill="#ff2a1a"/>
<rect x="369.66" y="422.10" width="2.60" height="2.60" fill="#ff2a1a"/>
<rect x="393.68" y="416.70" width="2.60" height="2.60" fill="#ff2a1a"/>
<rect x="417.70" y="411.20" width="2.60" height="2.60" fill="#ff2a1a"/>
<rect x="441.72" y="405.20" width="2.60" height="2.60" fill="#ff2a1a"/>
<rect x="465.74" y="399.60" width="2.60" height="2.60" fill="#ff2a1a"/>
<rect x="489.76" y="394.10" width="2.60" height="2.60" fill="#ff2a1a"/>
<rect x="513.78" y="388.60" width="2.60" height="2.60" fill="#ff2a1a"/>
<path d="M536.00 283.80 H541.60 L538.80 287.20 Z M536.00 294.80 H541.60 L538.80 291.30 Z" fill="#ff0000"/>
</g>
<line x1="56" y1="145.60" x2="538.6" y2="145.60" stroke="#5a5a5a" stroke-width="1.5"/>
<line x1="56" y1="249.90" x2="538.6" y2="249.90" stroke="#5a5a5a" stroke-width="1.5"/>
<line x1="56" y1="368.10" x2="538.6" y2="368.10" stroke="#5a5a5a" stroke-width="1.5"/>
<line x1="58" y1="514.7" x2="538.8" y2="514.7" stroke="#333" stroke-width="1.6"/>
<line x1="538.5" y1="29.8" x2="538.5" y2="514.7" stroke="#444" stroke-width="1.2"/>
<rect x="277" y="39.6" width="5" height="493" fill="url(#sh)"/>
<rect x="275" y="39.6" width="2" height="493" fill="#2a7d2a"/>
<rect x="268.83" y="30.30" width="58.75" height="9.30" fill="#fff"/>
<text x="298.20" y="38.09" font-size="8.70" fill="#222" text-anchor="middle" textLength="56.75" lengthAdjust="spacingAndGlyphs" >target positoin1</text>
<rect x="268.36" y="146.30" width="59.67" height="9.10" fill="#fff"/>
<text x="298.20" y="154.09" font-size="8.70" fill="#222" text-anchor="middle" textLength="57.67" lengthAdjust="spacingAndGlyphs" >actual position1</text>
<rect x="268.83" y="250.60" width="58.75" height="9.60" fill="#fff"/>
<text x="298.20" y="259.29" font-size="8.70" fill="#222" text-anchor="middle" textLength="56.75" lengthAdjust="spacingAndGlyphs" >target positoin2</text>
<rect x="268.36" y="368.80" width="59.67" height="9.40" fill="#fff"/>
<text x="298.20" y="377.29" font-size="8.70" fill="#222" text-anchor="middle" textLength="57.67" lengthAdjust="spacingAndGlyphs" >actual position2</text>
<line x1="265" y1="145.60" x2="335" y2="145.60" stroke="#5a5a5a" stroke-width="1.5"/>
<line x1="265" y1="249.90" x2="335" y2="249.90" stroke="#5a5a5a" stroke-width="1.5"/>
<line x1="265" y1="368.10" x2="335" y2="368.10" stroke="#5a5a5a" stroke-width="1.5"/>
<line x1="270" y1="514.7" x2="290" y2="514.7" stroke="#333" stroke-width="1.6"/>
<rect x="276.9" y="77.30" width="42.3" height="12.1" rx="2.2" fill="#1a6e1a" stroke="#0f5a0f" stroke-width="0.5"/>
<text x="298.20" y="86.40" font-size="8.60" fill="#fff" text-anchor="middle" textLength="39.20" lengthAdjust="spacingAndGlyphs" >143043715</text>
<rect x="276.9" y="196.50" width="42.3" height="12.1" rx="2.2" fill="#1a6e1a" stroke="#0f5a0f" stroke-width="0.5"/>
<text x="298.20" y="205.60" font-size="8.60" fill="#fff" text-anchor="middle" textLength="39.20" lengthAdjust="spacingAndGlyphs" >143040893</text>
<rect x="276.9" y="319.30" width="42.3" height="12.1" rx="2.2" fill="#1a6e1a" stroke="#0f5a0f" stroke-width="0.5"/>
<text x="298.20" y="328.40" font-size="8.60" fill="#fff" text-anchor="middle" textLength="39.20" lengthAdjust="spacingAndGlyphs" >143063319</text>
<rect x="276.9" y="445.20" width="42.3" height="12.1" rx="2.2" fill="#1a6e1a" stroke="#0f5a0f" stroke-width="0.5"/>
<text x="298.20" y="454.30" font-size="8.60" fill="#fff" text-anchor="middle" textLength="39.20" lengthAdjust="spacingAndGlyphs" >143060271</text>
<rect x="539.3" y="12.2" width="14.2" height="533.2" fill="#efefef"/>
<line x1="553.6" y1="12.2" x2="553.6" y2="545.4" stroke="#dcdcdc" stroke-width="0.8"/>
<circle cx="545.85" cy="19.9" r="5.7" fill="#fafafa" stroke="#2a2a2a" stroke-width="1.1"/>
<path d="M544.6 17.6 L547 19.9 L544.6 22.2" fill="none" stroke="#222" stroke-width="1.5"/>
<path d="M542 30.5 L550.2 39.2 M550.2 30.5 L542 39.2" stroke="#8a8a8a" stroke-width="1.2"/>
<path d="M548.6 30.2 L551 32.6 M541.2 37.6 L543.6 40" stroke="#8a8a8a" stroke-width="1.4"/>
<g transform="translate(542.7,40.5) rotate(90)">
<text x="0" y="0" font-size="8.3" fill="#4a4a4a" textLength="37.2" lengthAdjust="spacingAndGlyphs">Properties</text>
</g>
<rect x="590.6" y="13.4" width="36.4" height="13.2" fill="#e6e6e6" stroke="#c9c9c9" stroke-width="0.8"/>
<line x1="627" y1="26.4" x2="766" y2="26.4" stroke="#d4d4d4" stroke-width="0.8"/>
<text x="558.60" y="23.02" font-size="8.50" fill="#222" text-anchor="start" textLength="27.40" lengthAdjust="spacingAndGlyphs" >Buckets</text>
<text x="593.80" y="23.22" font-size="8.50" fill="#333" text-anchor="start" textLength="29.30" lengthAdjust="spacingAndGlyphs" >Markers</text>
<rect x="557.4" y="28.7" width="207" height="15" rx="1.5" fill="#eaf2fb"/>
<rect x="559.2" y="31.4" width="0.9" height="0.9" fill="#666"/>
<rect x="559.2" y="33.9" width="0.9" height="0.9" fill="#666"/>
<rect x="559.2" y="36.4" width="0.9" height="0.9" fill="#666"/>
<rect x="559.2" y="38.9" width="0.9" height="0.9" fill="#666"/>
<path d="M566.2 36.3 H576.2 M571.2 31.3 V41.3" stroke="#111" stroke-width="1.9"/>
<path d="M585.6 33 H594.4 M588.4 33 V31.8 H591.6 V33" stroke="#222" stroke-width="1" fill="none"/><path d="M586.6 33.8 H593.4 L592.8 41 H587.2 Z" fill="#1c1c1c"/><path d="M588.6 35 V40 M590 35 V40 M591.4 35 V40" stroke="#8a8a8a" stroke-width="0.5"/>
<path d="M759.5 37.6 H762.5 M759.5 39.2 H762.5 L761 40.8 Z" stroke="#777" stroke-width="0.5" fill="#777"/>
<path d="M565.90 50.10 L565.90 55.40 L560.20 55.40 Z" fill="#333"/>
<text x="571.40" y="56.09" font-size="8.70" fill="#333" text-anchor="start" textLength="20.29" lengthAdjust="spacingAndGlyphs" >Chart</text>
<path d="M578.20 66.90 L578.20 72.20 L572.50 72.20 Z" fill="#333"/>
<rect x="590.90" y="65.60" width="4" height="8.4" fill="#fff" stroke="#b0b0b0" stroke-width="0.9"/>
<line x1="587.80" y1="65.20" x2="587.80" y2="74.40" stroke="#b0b0b0" stroke-width="1.2" stroke-dasharray="1.2,0.8"/>
<path d="M586.30 66.80 L589.30 66.80 L587.80 64.60 Z M586.30 72.80 L589.30 72.80 L587.80 75.00 Z" fill="#b0b0b0"/>
<text x="600.40" y="72.89" font-size="8.70" fill="#333" text-anchor="start" textLength="56.75" lengthAdjust="spacingAndGlyphs" >target positoin1</text>
<path d="M598.60 88.38 Q603.60 83.98 608.60 88.38 Q603.60 92.78 598.60 88.38 Z" fill="none" stroke="#6a6a6a" stroke-width="1.3"/>
<circle cx="603.60" cy="88.38" r="1.8" fill="#6a6a6a"/>
<rect x="610.6" y="83.68" width="9.4" height="9.4" fill="#ff0000"/>
<text x="622.70" y="91.47" font-size="8.70" fill="#333" text-anchor="start" textLength="56.75" lengthAdjust="spacingAndGlyphs" >target position1</text>
<path d="M578.20 104.06 L578.20 109.36 L572.50 109.36 Z" fill="#333"/>
<rect x="590.90" y="102.76" width="4" height="8.4" fill="#fff" stroke="#b0b0b0" stroke-width="0.9"/>
<line x1="587.80" y1="102.36" x2="587.80" y2="111.56" stroke="#b0b0b0" stroke-width="1.2" stroke-dasharray="1.2,0.8"/>
<path d="M586.30 103.96 L589.30 103.96 L587.80 101.76 Z M586.30 109.96 L589.30 109.96 L587.80 112.16 Z" fill="#b0b0b0"/>
<text x="600.40" y="110.05" font-size="8.70" fill="#333" text-anchor="start" textLength="57.67" lengthAdjust="spacingAndGlyphs" >actual position1</text>
<path d="M598.60 125.54 Q603.60 121.14 608.60 125.54 Q603.60 129.94 598.60 125.54 Z" fill="none" stroke="#6a6a6a" stroke-width="1.3"/>
<circle cx="603.60" cy="125.54" r="1.8" fill="#6a6a6a"/>
<rect x="610.6" y="120.84" width="9.4" height="9.4" fill="#008000"/>
<text x="622.70" y="128.63" font-size="8.70" fill="#333" text-anchor="start" textLength="57.67" lengthAdjust="spacingAndGlyphs" >actual position1</text>
<path d="M578.20 141.22 L578.20 146.52 L572.50 146.52 Z" fill="#333"/>
<rect x="590.90" y="139.92" width="4" height="8.4" fill="#fff" stroke="#b0b0b0" stroke-width="0.9"/>
<line x1="587.80" y1="139.52" x2="587.80" y2="148.72" stroke="#b0b0b0" stroke-width="1.2" stroke-dasharray="1.2,0.8"/>
<path d="M586.30 141.12 L589.30 141.12 L587.80 138.92 Z M586.30 147.12 L589.30 147.12 L587.80 149.32 Z" fill="#b0b0b0"/>
<text x="600.40" y="147.21" font-size="8.70" fill="#333" text-anchor="start" textLength="56.75" lengthAdjust="spacingAndGlyphs" >target positoin2</text>
<path d="M598.60 162.70 Q603.60 158.30 608.60 162.70 Q603.60 167.10 598.60 162.70 Z" fill="none" stroke="#6a6a6a" stroke-width="1.3"/>
<circle cx="603.60" cy="162.70" r="1.8" fill="#6a6a6a"/>
<rect x="610.6" y="158.00" width="9.4" height="9.4" fill="#006400"/>
<text x="622.70" y="165.79" font-size="8.70" fill="#333" text-anchor="start" textLength="56.75" lengthAdjust="spacingAndGlyphs" >target position2</text>
<rect x="593.3" y="190.86" width="171.3" height="18.6" fill="#f2f2f2" stroke="#dedede" stroke-width="0.8"/>
<path d="M578.20 178.38 L578.20 183.68 L572.50 183.68 Z" fill="#333"/>
<rect x="590.90" y="177.08" width="4" height="8.4" fill="#fff" stroke="#222" stroke-width="0.9"/>
<line x1="587.80" y1="176.68" x2="587.80" y2="185.88" stroke="#222" stroke-width="1.2" />
<path d="M586.30 178.28 L589.30 178.28 L587.80 176.08 Z M586.30 184.28 L589.30 184.28 L587.80 186.48 Z" fill="#222"/>
<text x="600.40" y="184.37" font-size="8.70" fill="#333" text-anchor="start" textLength="57.67" lengthAdjust="spacingAndGlyphs" >actual position2</text>
<path d="M598.60 199.86 Q603.60 195.46 608.60 199.86 Q603.60 204.26 598.60 199.86 Z" fill="none" stroke="#6a6a6a" stroke-width="1.3"/>
<circle cx="603.60" cy="199.86" r="1.8" fill="#6a6a6a"/>
<rect x="610.6" y="195.16" width="9.4" height="9.4" fill="#ff6347"/>
<text x="622.70" y="202.95" font-size="8.70" fill="#333" text-anchor="start" textLength="57.67" lengthAdjust="spacingAndGlyphs" >actual position2</text>
<rect x="555.0" y="378.1" width="209.7" height="137.4" fill="#ffffff" stroke="#d6d6d6" stroke-width="0.8"/>
<rect x="555.0" y="378.1" width="209.7" height="13.6" fill="#d9d9d9"/>
<text x="559.80" y="387.51" font-size="8.20" fill="#222" text-anchor="start" textLength="30.80" lengthAdjust="spacingAndGlyphs" font-weight="bold" >Variable</text>
<rect x="555.0" y="391.7" width="209.7" height="11.6" fill="#f0f0f0"/>
<path d="M563.8 395.4 L563.8 399.0 L560.2 399.0 Z" fill="#333"/>
<text x="569.50" y="400.24" font-size="8.00" fill="#222" text-anchor="start" textLength="17.78" lengthAdjust="spacingAndGlyphs" font-weight="bold" >Misc</text>
<rect x="555.0" y="403.3" width="6.8" height="109.2" fill="#f0f0f0"/>
<rect x="561.8" y="402.90" width="94.4" height="14.20" fill="#c8e3f5"/>
<line x1="561.8" y1="417.10" x2="764.7" y2="417.10" stroke="#ebebeb" stroke-width="0.8"/>
<text x="572.80" y="413.02" font-size="8.50" fill="#333" text-anchor="start" textLength="37.92" lengthAdjust="spacingAndGlyphs" >Chart type</text>
<rect x="656.5" y="403.60" width="108.1" height="12.80" fill="#e9e9e9" stroke="#c4c4c4" stroke-width="0.8"/>
<path d="M757.2 409.20 L758.9 410.90 L760.6 409.20" fill="none" stroke="#555" stroke-width="0.8"/>
<text x="660.50" y="412.98" font-size="8.40" fill="#222" text-anchor="start" textLength="22.24" lengthAdjust="spacingAndGlyphs" >Linear</text>
<line x1="561.8" y1="431.20" x2="764.7" y2="431.20" stroke="#ebebeb" stroke-width="0.8"/>
<text x="572.80" y="427.22" font-size="8.50" fill="#333" text-anchor="start" textLength="19.64" lengthAdjust="spacingAndGlyphs" >Color</text>
<rect x="658.8" y="420.00" width="12.9" height="8.2" fill="#ff6347"/>
<text x="674.50" y="427.18" font-size="8.40" fill="#222" text-anchor="start" textLength="26.23" lengthAdjust="spacingAndGlyphs" >Tomato</text>
<line x1="561.8" y1="445.20" x2="764.7" y2="445.20" stroke="#ebebeb" stroke-width="0.8"/>
<text x="572.80" y="441.22" font-size="8.50" fill="#333" text-anchor="start" textLength="45.24" lengthAdjust="spacingAndGlyphs" >Interpolation</text>
<rect x="656.5" y="431.80" width="108.1" height="12.80" fill="#e9e9e9" stroke="#c4c4c4" stroke-width="0.8"/>
<path d="M757.2 437.40 L758.9 439.10 L760.6 437.40" fill="none" stroke="#555" stroke-width="0.8"/>
<text x="660.50" y="441.18" font-size="8.40" fill="#222" text-anchor="start" textLength="16.46" lengthAdjust="spacingAndGlyphs" >Step</text>
<line x1="561.8" y1="459.05" x2="764.7" y2="459.05" stroke="#ebebeb" stroke-width="0.8"/>
<text x="572.80" y="455.22" font-size="8.50" fill="#333" text-anchor="start" textLength="43.41" lengthAdjust="spacingAndGlyphs" >Line pattern</text>
<rect x="656.5" y="445.80" width="108.1" height="12.80" fill="#e9e9e9" stroke="#c4c4c4" stroke-width="0.8"/>
<path d="M757.2 451.40 L758.9 453.10 L760.6 451.40" fill="none" stroke="#555" stroke-width="0.8"/>
<text x="660.50" y="455.18" font-size="8.40" fill="#222" text-anchor="start" textLength="19.12" lengthAdjust="spacingAndGlyphs" >None</text>
<line x1="561.8" y1="472.25" x2="764.7" y2="472.25" stroke="#ebebeb" stroke-width="0.8"/>
<text x="572.80" y="468.92" font-size="8.50" fill="#333" text-anchor="start" textLength="37.01" lengthAdjust="spacingAndGlyphs" >Line width</text>
<text x="660.50" y="468.88" font-size="8.40" fill="#222" text-anchor="start" textLength="4.45" lengthAdjust="spacingAndGlyphs" >1</text>
<line x1="561.8" y1="485.35" x2="764.7" y2="485.35" stroke="#ebebeb" stroke-width="0.8"/>
<text x="572.80" y="481.62" font-size="8.50" fill="#333" text-anchor="start" textLength="35.64" lengthAdjust="spacingAndGlyphs" >Point size</text>
<text x="660.50" y="481.58" font-size="8.40" fill="#222" text-anchor="start" textLength="4.45" lengthAdjust="spacingAndGlyphs" >3</text>
<line x1="561.8" y1="498.90" x2="764.7" y2="498.90" stroke="#ebebeb" stroke-width="0.8"/>
<text x="572.80" y="495.12" font-size="8.50" fill="#333" text-anchor="start" textLength="53.45" lengthAdjust="spacingAndGlyphs" >Points visibility</text>
<rect x="656.5" y="485.70" width="108.1" height="12.80" fill="#e9e9e9" stroke="#c4c4c4" stroke-width="0.8"/>
<path d="M757.2 491.30 L758.9 493.00 L760.6 491.30" fill="none" stroke="#555" stroke-width="0.8"/>
<text x="660.50" y="495.08" font-size="8.40" fill="#222" text-anchor="start" textLength="16.46" lengthAdjust="spacingAndGlyphs" >Auto</text>
<line x1="561.8" y1="512.40" x2="764.7" y2="512.40" stroke="#ebebeb" stroke-width="0.8"/>
<text x="572.80" y="508.72" font-size="8.50" fill="#333" text-anchor="start" textLength="76.30" lengthAdjust="spacingAndGlyphs" >String representation</text>
<rect x="656.5" y="499.30" width="108.1" height="12.80" fill="#f1f1f1" stroke="#dddddd" stroke-width="0.8"/>
<path d="M757.2 504.90 L758.9 506.60 L760.6 504.90" fill="none" stroke="#bbb" stroke-width="0.8"/>
<text x="660.50" y="508.68" font-size="8.40" fill="#9a9a9a" text-anchor="start" textLength="28.89" lengthAdjust="spacingAndGlyphs" >Decimal</text>
<line x1="655.9" y1="403.4" x2="655.9" y2="512.2" stroke="#e6e6e6" stroke-width="0.8"/>
<rect x="555" y="516.2" width="209.7" height="1.9" fill="#5e7d8f"/>
<rect x="555" y="518.1" width="209.7" height="25.4" fill="#dfdfdf" stroke="#cfcfcf" stroke-width="0.6"/>
<text x="557.40" y="528.24" font-size="8.00" fill="#222" text-anchor="start" textLength="39.56" lengthAdjust="spacingAndGlyphs" font-weight="bold" >Chart type</text>
</svg>
</body></html>
